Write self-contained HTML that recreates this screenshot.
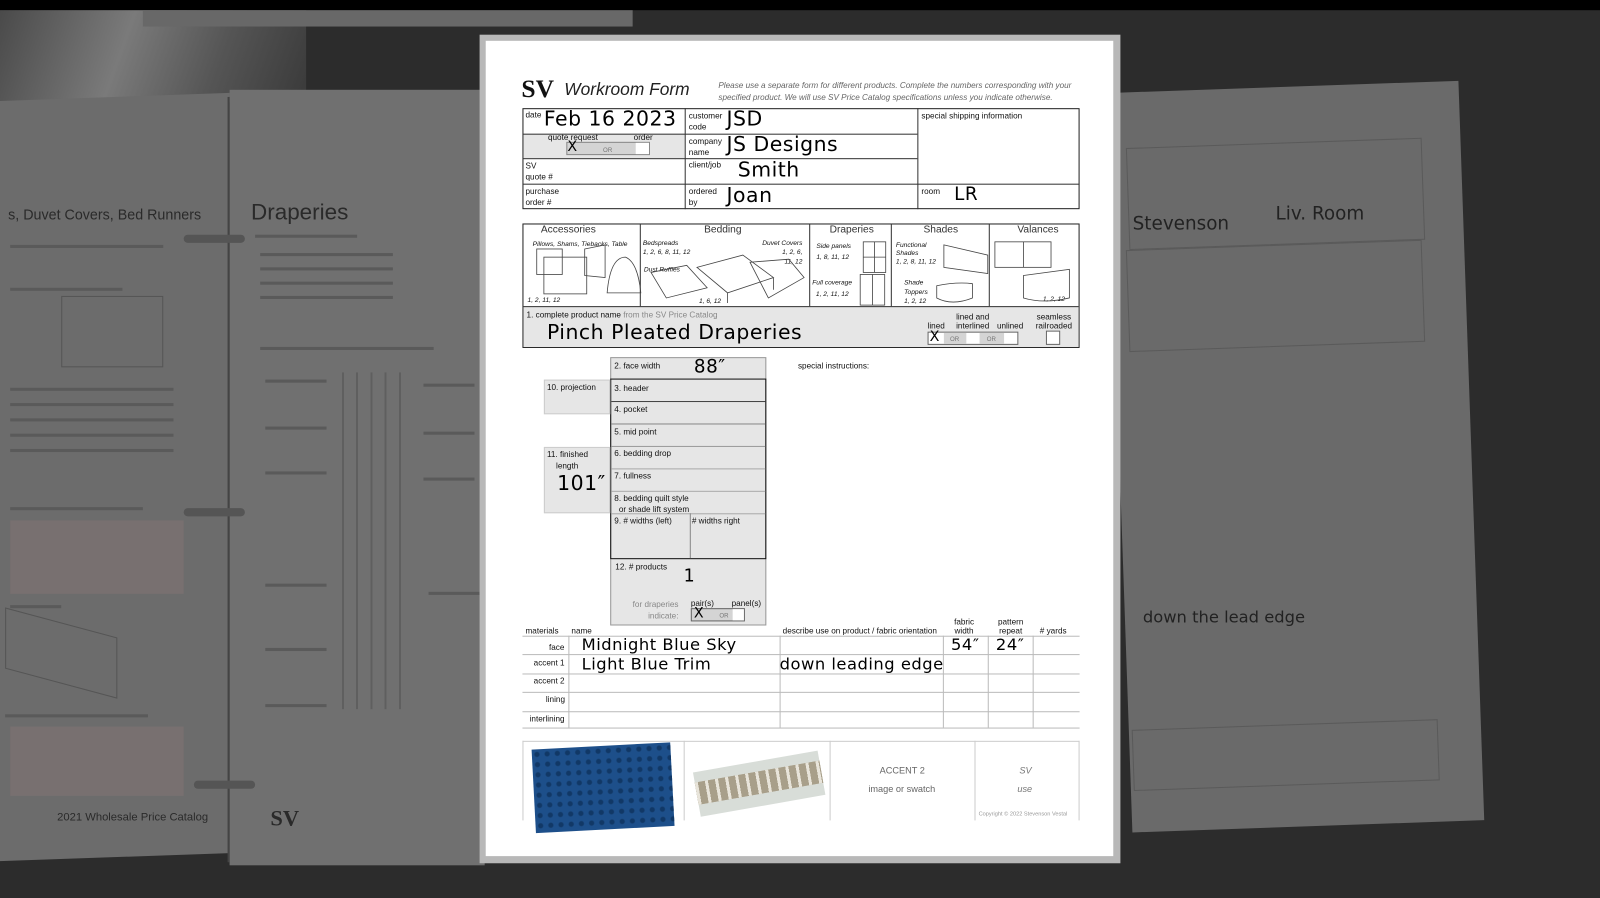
<!DOCTYPE html>
<html><head><meta charset="utf-8"><style>
*{margin:0;padding:0;box-sizing:border-box}
html,body{width:1600px;height:898px;overflow:hidden;background:#2c2c2c}
#s{position:absolute;left:0;top:0;width:1568px;height:880px;transform:scale(1.020408);transform-origin:0 0;font-family:"Liberation Sans",sans-serif;color:#111}
.a{position:absolute}
.t{position:absolute;font-size:8px;line-height:10px;white-space:nowrap}
.h{position:absolute;font-family:"DejaVu Sans",sans-serif;white-space:nowrap;color:#000;letter-spacing:0.5px}
.b{position:absolute;border:1px solid #222}
.g{background:#e6e6e6}
.i{font-style:italic}
.ln{position:absolute;height:3px;background:#5a5a5a}
</style></head><body><div id="s">
<div class="a" style="left:0;top:0;width:1568px;height:10px;background:#000"></div>
<div class="a" style="left:0;top:10px;width:300px;height:90px;background:linear-gradient(110deg,#4a4a4a 0%,#7a7a7a 40%,#555 70%,#3a3a3a 100%)"></div>
<div class="a" style="left:140px;top:10px;width:480px;height:16px;background:#686868"></div>
<!-- left binder -->
<div class="a" style="left:0;top:95px;width:225px;height:745px;background:#6c6c6c;transform:skewY(-2deg)"></div>
<div class="a" style="left:225px;top:88px;width:250px;height:760px;background:#707070"></div>
<div class="a" style="left:223px;top:95px;width:2px;height:750px;background:#444"></div>
<div class="ln" style="left:10px;top:240px;width:150px"></div><div class="ln" style="left:10px;top:282px;width:110px"></div>
<div class="a" style="left:60px;top:290px;width:100px;height:70px;border:1px solid #555"></div>
<div class="ln" style="left:10px;top:380px;width:160px"></div><div class="ln" style="left:10px;top:395px;width:160px"></div><div class="ln" style="left:10px;top:410px;width:160px"></div><div class="ln" style="left:10px;top:425px;width:160px"></div><div class="ln" style="left:10px;top:440px;width:160px"></div>
<div class="ln" style="left:10px;top:497px;width:130px"></div>
<div class="a" style="left:10px;top:510px;width:170px;height:72px;background:#787070"></div>
<div class="ln" style="left:10px;top:593px;width:50px"></div>
<div class="a" style="left:5px;top:610px;width:110px;height:60px;border:1px solid #555;transform:skewY(15deg)"></div>
<div class="ln" style="left:5px;top:700px;width:140px"></div>
<div class="a" style="left:10px;top:712px;width:170px;height:68px;background:#787070"></div>
<div class="ln" style="left:250px;top:230px;width:100px"></div><div class="ln" style="left:255px;top:248px;width:130px"></div><div class="ln" style="left:255px;top:262px;width:130px"></div><div class="ln" style="left:255px;top:276px;width:130px"></div><div class="ln" style="left:255px;top:290px;width:130px"></div>
<div class="ln" style="left:255px;top:340px;width:170px"></div>
<div class="a" style="left:335px;top:365px;width:70px;height:330px;background:repeating-linear-gradient(90deg,#5f5f5f 0 2px,transparent 2px 14px)"></div>
<div class="ln" style="left:260px;top:372px;width:60px"></div><div class="ln" style="left:260px;top:418px;width:60px"></div><div class="ln" style="left:260px;top:462px;width:60px"></div><div class="ln" style="left:260px;top:572px;width:60px"></div><div class="ln" style="left:260px;top:635px;width:60px"></div><div class="ln" style="left:260px;top:690px;width:60px"></div>
<div class="ln" style="left:415px;top:376px;width:50px"></div><div class="ln" style="left:415px;top:423px;width:50px"></div><div class="ln" style="left:415px;top:468px;width:50px"></div><div class="ln" style="left:420px;top:580px;width:50px"></div>
<div class="t" style="left:8px;top:205px;font-size:14px;color:#2a2a2a">s, Duvet Covers, Bed Runners</div>
<div class="t" style="left:246px;top:196px;font-size:22px;line-height:24px;color:#2a2a2a">Draperies</div>
<div class="t" style="left:56px;top:796px;font-size:11px;color:#2a2a2a">2021 Wholesale Price Catalog</div>
<div class="t" style="left:265px;top:790px;font-size:22px;line-height:24px;font-family:'Liberation Serif',serif;font-weight:bold;color:#2a2a2a">SV</div>
<div class="a" style="left:180px;top:230px;width:60px;height:8px;border-radius:4px;background:#555"></div>
<div class="a" style="left:180px;top:498px;width:60px;height:8px;border-radius:4px;background:#555"></div>
<div class="a" style="left:190px;top:765px;width:60px;height:8px;border-radius:4px;background:#555"></div>
<!-- right page -->
<div class="a" style="left:1097px;top:85px;width:345px;height:725px;background:#6a6a6a;transform:rotate(-2deg)"></div>
<div class="a" style="left:1105px;top:140px;width:290px;height:100px;border:1px solid #5a5a5a;transform:rotate(-2deg)"></div>
<div class="a" style="left:1105px;top:240px;width:290px;height:100px;border:1px solid #5a5a5a;transform:rotate(-2deg)"></div>
<div class="a" style="left:1110px;top:710px;width:300px;height:60px;border:1px solid #5a5a5a;transform:rotate(-2deg)"></div>
<div class="t" style="left:1250px;top:205px;font-size:18px;font-family:'DejaVu Sans',sans-serif;color:#222">Liv. Room</div>
<div class="t" style="left:1110px;top:215px;font-size:18px;font-family:'DejaVu Sans',sans-serif;color:#222">Stevenson</div>
<div class="t" style="left:1120px;top:600px;font-size:16px;font-family:'DejaVu Sans',sans-serif;color:#222">down the lead edge</div>
<!-- paper -->
<div class="a" style="left:470px;top:34px;width:628px;height:812px;background:#b8b8b8"></div>
<div class="a" style="left:476px;top:40px;width:615px;height:799px;background:#fff"></div>
<div class="t" style="left:511px;top:74px;font-size:25px;line-height:28px;font-family:'Liberation Serif',serif;font-weight:bold">SV</div>
<div class="t i" style="left:553px;top:78px;font-size:17px;line-height:20px;color:#222">Workroom Form</div>
<div class="t i" style="left:704px;top:78px;color:#666;line-height:12px">Please use a separate form for different products. Complete the numbers corresponding with your<br>specified product. We will use SV Price Catalog specifications unless you indicate otherwise.</div>
<!-- top table -->
<div class="b" style="left:512px;top:106px;width:546px;height:99px"></div>
<div class="a g" style="left:513px;top:131px;width:158px;height:24px"></div>
<div class="a" style="left:512px;top:131px;width:387px;height:1px;background:#333"></div>
<div class="a" style="left:512px;top:155px;width:387px;height:1px;background:#333"></div>
<div class="a" style="left:512px;top:180px;width:546px;height:1px;background:#333"></div>
<div class="a" style="left:671px;top:106px;width:1px;height:99px;background:#333"></div>
<div class="a" style="left:899px;top:106px;width:1px;height:99px;background:#333"></div>
<div class="t" style="left:515px;top:108px">date</div>
<div class="h" style="left:533px;top:104px;font-size:20px">Feb 16 2023</div>
<div class="t" style="left:537px;top:130px">quote request</div><div class="t" style="left:621px;top:130px">order</div>
<div class="a" style="left:555px;top:139px;width:82px;height:13px;border:1px solid #888;background:#d4d4d4"></div>
<div class="a" style="left:623px;top:140px;width:13px;height:11px;background:#fff"></div>
<div class="t" style="left:591px;top:143px;font-size:6px;color:#777">OR</div>
<div class="h" style="left:556px;top:136px;font-size:14px">X</div>
<div class="t" style="left:515px;top:157px;line-height:11px">SV<br>quote #</div>
<div class="t" style="left:515px;top:182px;line-height:11px">purchase<br>order #</div>
<div class="t" style="left:675px;top:108px;line-height:11px">customer<br>code</div>
<div class="t" style="left:675px;top:133px;line-height:11px">company<br>name</div>
<div class="t" style="left:675px;top:157px">client/job</div>
<div class="t" style="left:675px;top:182px;line-height:11px">ordered<br>by</div>
<div class="h" style="left:712px;top:104px;font-size:20px">JSD</div>
<div class="h" style="left:712px;top:129px;font-size:20px">JS Designs</div>
<div class="h" style="left:723px;top:154px;font-size:20px">Smith</div>
<div class="h" style="left:712px;top:179px;font-size:20px">Joan</div>
<div class="t" style="left:903px;top:109px">special shipping information</div>
<div class="t" style="left:903px;top:183px">room</div>
<div class="h" style="left:935px;top:180px;font-size:18px">LR</div>
<!-- category table -->
<div class="b" style="left:512px;top:219px;width:546px;height:122px"></div>
<div class="a g" style="left:513px;top:300px;width:544px;height:40px;border-top:1px solid #333"></div>
<div class="a" style="left:627px;top:219px;width:1px;height:81px;background:#333"></div>
<div class="a" style="left:793px;top:219px;width:1px;height:81px;background:#333"></div>
<div class="a" style="left:873px;top:219px;width:1px;height:81px;background:#333"></div>
<div class="a" style="left:969px;top:219px;width:1px;height:81px;background:#333"></div>
<div class="t" style="left:530px;top:221px;font-size:10px;color:#333">Accessories</div>
<div class="t" style="left:690px;top:221px;font-size:10px;color:#333">Bedding</div>
<div class="t" style="left:813px;top:221px;font-size:10px;color:#333">Draperies</div>
<div class="t" style="left:905px;top:221px;font-size:10px;color:#333">Shades</div>
<div class="t" style="left:997px;top:221px;font-size:10px;color:#333">Valances</div>
<div class="t i" style="left:522px;top:235px;font-size:6.5px">Pillows, Shams, Tiebacks, Table</div>
<div class="t i" style="left:630px;top:234px;font-size:6.5px;line-height:9px">Bedspreads<br>1, 2, 6, 8, 11, 12</div>
<div class="t i" style="left:631px;top:260px;font-size:6.5px">Dust Ruffles</div>
<div class="t i" style="left:747px;top:234px;font-size:6.5px;line-height:9px;text-align:right">Duvet Covers<br>1, 2, 6,<br>11, 12</div>
<div class="t i" style="left:800px;top:236px;font-size:6.5px;line-height:11px">Side panels<br>1, 8, 11, 12</div>
<div class="t i" style="left:796px;top:272px;font-size:6.5px;line-height:11px">Full coverage<br>&nbsp;&nbsp;1, 2, 11, 12</div>
<div class="t i" style="left:878px;top:237px;font-size:6.5px;line-height:8px">Functional<br>Shades<br>1, 2, 8, 11, 12</div>
<div class="t i" style="left:886px;top:273px;font-size:6.5px;line-height:9px">Shade<br>Toppers<br>1, 2, 12</div>
<div class="t i" style="left:517px;top:290px;font-size:6.5px">1, 2, 11, 12</div>
<div class="t i" style="left:685px;top:291px;font-size:6.5px">1, 6, 12</div>
<div class="t i" style="left:1022px;top:289px;font-size:6.5px">1, 2, 12</div>
<svg class="a" style="left:513px;top:232px" width="544" height="68" fill="none" stroke="#444" stroke-width="0.8">
<rect x="13" y="12" width="25" height="25"/><rect x="20" y="20" width="42" height="36"/><path d="M60 12 L80 8 L80 40 L60 38Z"/><path d="M82 55 Q85 20 100 20 Q112 25 115 55Z"/>
<path d="M170 30 L215 18 L245 40 L200 55Z M200 55 L200 65 M245 40 L245 52"/><path d="M125 35 L160 28 L180 50 L140 60Z"/><path d="M222 25 L260 22 L275 40 L240 60Z"/>
<rect x="333" y="5" width="22" height="30"/><path d="M344 5 V35 M333 20 H355"/><rect x="330" y="37" width="24" height="30"/><path d="M342 37 V67"/>
<path d="M412 8 L455 18 L455 36 L412 30Z"/><path d="M405 48 Q425 44 440 46 L440 60 Q420 68 405 60Z"/>
<rect x="462" y="5" width="55" height="25"/><path d="M490 5V30"/><path d="M490 38 L535 32 L535 60 Q510 66 490 60Z"/>
</svg>
<div class="t" style="left:516px;top:304px"><b style="font-weight:normal;color:#111">1. complete product name</b> <span style="color:#888">from the SV Price Catalog</span></div>
<div class="h" style="left:536px;top:313px;font-size:20px">Pinch Pleated Draperies</div>
<div class="t" style="left:909px;top:315px">lined</div>
<div class="t" style="left:937px;top:306px;line-height:9px;text-align:center">lined and<br>interlined</div>
<div class="t" style="left:977px;top:315px">unlined</div>
<div class="t" style="left:1015px;top:306px;line-height:9px;text-align:center">seamless<br>railroaded</div>
<div class="a" style="left:909px;top:325px;width:89px;height:13px;border:1px solid #666;background:#fff"></div>
<div class="a" style="left:925px;top:326px;width:22px;height:11px;background:#d4d4d4"></div>
<div class="a" style="left:960px;top:326px;width:24px;height:11px;background:#d4d4d4"></div>
<div class="t" style="left:931px;top:328px;font-size:6px;color:#777">OR</div><div class="t" style="left:967px;top:328px;font-size:6px;color:#777">OR</div>
<div class="h" style="left:911px;top:322px;font-size:14px">X</div>
<div class="a" style="left:1025px;top:324px;width:14px;height:14px;border:1px solid #666;background:#fff"></div>
<!-- middle section -->
<div class="a g" style="left:598px;top:350px;width:153px;height:263px;border:1px solid #999"></div>
<div class="a" style="left:598px;top:371px;width:153px;height:177px;border:1.5px solid #111"></div>
<div class="a" style="left:599px;top:393px;width:151px;height:1px;background:#444"></div>
<div class="a" style="left:599px;top:415px;width:151px;height:1px;background:#888"></div>
<div class="a" style="left:599px;top:437px;width:151px;height:1px;background:#999"></div>
<div class="a" style="left:599px;top:459px;width:151px;height:1px;background:#aaa"></div>
<div class="a" style="left:599px;top:481px;width:151px;height:1px;background:#aaa"></div>
<div class="a" style="left:599px;top:503px;width:151px;height:1px;background:#aaa"></div>
<div class="a" style="left:676px;top:503px;width:1px;height:44px;background:#888"></div>
<div class="a g" style="left:533px;top:372px;width:65px;height:34px;border:1px solid #ccc"></div>
<div class="a g" style="left:533px;top:438px;width:65px;height:65px;border:1px solid #ccc"></div>
<div class="t" style="left:536px;top:375px">10. projection</div>
<div class="t" style="left:536px;top:440px;line-height:11px">11. finished<br>&nbsp;&nbsp;&nbsp;&nbsp;length</div>
<div class="h" style="left:546px;top:461px;font-size:20px">101″</div>
<div class="t" style="left:602px;top:354px">2. face width</div>
<div class="h" style="left:680px;top:349px;font-size:18px">88″</div>
<div class="t" style="left:602px;top:376px">3. header</div>
<div class="t" style="left:602px;top:397px">4. pocket</div>
<div class="t" style="left:602px;top:419px">5. mid point</div>
<div class="t" style="left:602px;top:440px">6. bedding drop</div>
<div class="t" style="left:602px;top:462px">7. fullness</div>
<div class="t" style="left:602px;top:483px;line-height:11px">8. bedding quilt style<br>&nbsp;&nbsp;or shade lift system</div>
<div class="t" style="left:602px;top:506px">9. # widths (left)</div>
<div class="t" style="left:678px;top:506px"># widths right</div>
<div class="t" style="left:603px;top:551px">12. # products</div>
<div class="h" style="left:670px;top:555px;font-size:17px">1</div>
<div class="t" style="left:620px;top:587px;color:#888;line-height:11px;text-align:right">for draperies<br>&nbsp;&nbsp;&nbsp;&nbsp;indicate:</div>
<div class="t" style="left:677px;top:587px">pair(s)</div><div class="t" style="left:717px;top:587px">panel(s)</div>
<div class="a" style="left:677px;top:596px;width:53px;height:13px;border:1px solid #666;background:#d4d4d4"></div>
<div class="a" style="left:718px;top:597px;width:11px;height:11px;background:#fff"></div>
<div class="t" style="left:705px;top:599px;font-size:6px;color:#777">OR</div>
<div class="h" style="left:680px;top:593px;font-size:14px">X</div>
<div class="t" style="left:782px;top:354px">special instructions:</div>
<!-- materials -->
<div class="t" style="left:515px;top:614px">materials</div><div class="t" style="left:560px;top:614px">name</div>
<div class="t" style="left:767px;top:614px">describe use on product / fabric orientation</div>
<div class="t" style="left:935px;top:605px;line-height:9px;text-align:center">fabric<br>width</div>
<div class="t" style="left:978px;top:605px;line-height:9px;text-align:center">pattern<br>repeat</div>
<div class="t" style="left:1019px;top:614px"># yards</div>
<div class="a" style="left:512px;top:623px;width:546px;height:1px;background:#bbb"></div>
<div class="a" style="left:512px;top:641px;width:546px;height:1px;background:#bbb"></div>
<div class="a" style="left:512px;top:660px;width:546px;height:1px;background:#bbb"></div>
<div class="a" style="left:512px;top:678px;width:546px;height:1px;background:#bbb"></div>
<div class="a" style="left:512px;top:697px;width:546px;height:1px;background:#bbb"></div>
<div class="a" style="left:512px;top:713px;width:546px;height:1px;background:#bbb"></div>
<div class="a" style="left:557px;top:623px;width:1px;height:90px;background:#bbb"></div>
<div class="a" style="left:764px;top:623px;width:1px;height:90px;background:#bbb"></div>
<div class="a" style="left:924px;top:623px;width:1px;height:90px;background:#bbb"></div>
<div class="a" style="left:968px;top:623px;width:1px;height:90px;background:#bbb"></div>
<div class="a" style="left:1012px;top:623px;width:1px;height:90px;background:#bbb"></div>
<div class="t" style="left:538px;top:630px">face</div>
<div class="t" style="left:523px;top:645px">accent 1</div>
<div class="t" style="left:523px;top:663px">accent 2</div>
<div class="t" style="left:535px;top:681px">lining</div>
<div class="t" style="left:519px;top:700px">interlining</div>
<div class="h" style="left:570px;top:622px;font-size:16px">Midnight Blue Sky</div>
<div class="h" style="left:570px;top:641px;font-size:16px">Light Blue Trim</div>
<div class="h" style="left:764px;top:641px;font-size:16px">down leading edge</div>
<div class="h" style="left:932px;top:622px;font-size:16px">54″</div>
<div class="h" style="left:976px;top:622px;font-size:16px">24″</div>
<!-- bottom -->
<div class="a" style="left:512px;top:726px;width:546px;height:1px;background:#ccc"></div>
<div class="a" style="left:512px;top:726px;width:1px;height:78px;background:#ccc"></div>
<div class="a" style="left:670px;top:726px;width:1px;height:78px;background:#ccc"></div>
<div class="a" style="left:813px;top:726px;width:1px;height:78px;background:#ccc"></div>
<div class="a" style="left:955px;top:726px;width:1px;height:78px;background:#ccc"></div>
<div class="a" style="left:1057px;top:726px;width:1px;height:78px;background:#ccc"></div>
<div class="a" style="left:523px;top:731px;width:136px;height:82px;background:#1d4f8a;transform:rotate(-3deg);background-image:radial-gradient(circle at 5px 5px,#113866 2px,transparent 3px);background-size:10px 10px"></div>
<div class="a" style="left:682px;top:746px;width:124px;height:44px;background:#d8ddd8;transform:rotate(-10deg)"><div style="margin-top:10px;height:22px;background:#b8b09c;background-image:repeating-linear-gradient(90deg,#e8e4da 0 3px,#a89f8a 3px 10px)"></div></div>
<div class="t" style="left:862px;top:750px;font-size:9px;color:#666">ACCENT 2</div>
<div class="t" style="left:851px;top:768px;font-size:9px;color:#666">image or swatch</div>
<div class="t i" style="left:999px;top:750px;font-size:9px;color:#777">SV</div>
<div class="t i" style="left:997px;top:768px;font-size:9px;color:#777">use</div>
<div class="t" style="left:959px;top:793px;font-size:5.5px;color:#999">Copyright © 2022 Stevenson Vestal</div>
</div></body></html>
